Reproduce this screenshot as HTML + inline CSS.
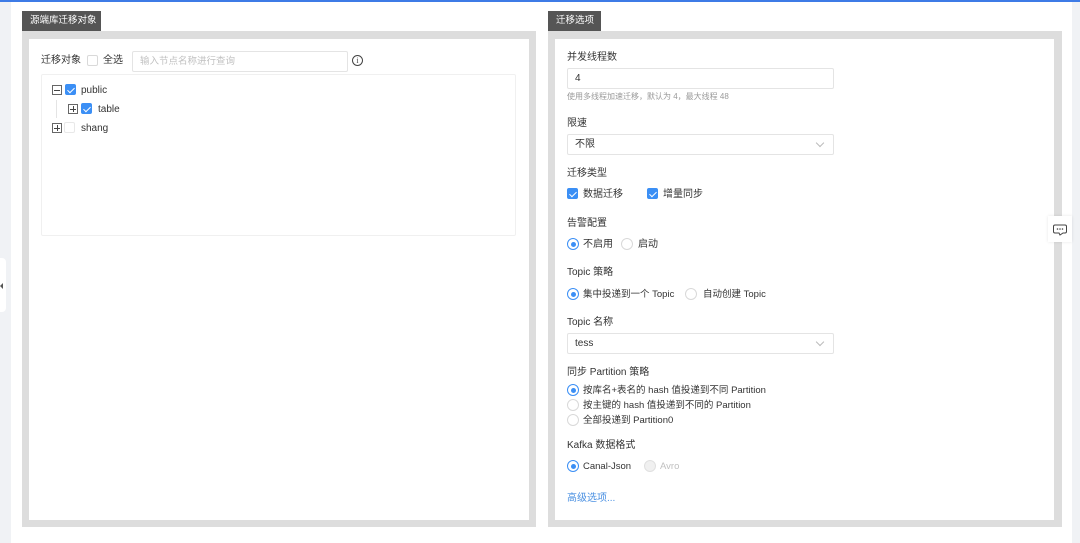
<!DOCTYPE html>
<html><head><meta charset="utf-8"><style>
*{box-sizing:border-box;margin:0;padding:0}
body{width:1080px;height:543px;background:#fff;font-family:"Liberation Sans","Noto Sans CJK SC",sans-serif;font-size:10px;color:#333;position:relative;overflow:hidden}
.a{position:absolute}
.tab{background:#555;color:#fff;font-size:9.5px;line-height:20px;padding-left:8px}
.frame{background:#ddd}
.in{background:#fff}
.lbl{font-size:10px;color:#333;line-height:12px}
.box{border:1px solid #e4e4e4;background:#fff;border-radius:2px;line-height:19px;padding:0 7px}
.cb{width:11px;height:11px;border-radius:2px;border:1px solid #d9d9d9;background:#fff}
.cb.on{background:#3b8ff5;border-color:#3b8ff5}
.cb.on:after{content:"";position:absolute;left:3px;top:1px;width:3px;height:6px;border:solid #fff;border-width:0 1.3px 1.3px 0;transform:rotate(45deg)}
.rd{width:12px;height:12px;border-radius:50%;border:1px solid #d9d9d9;background:#fff}
.rd.on{border-color:#3b8ff5}
.rd.on:after{content:"";position:absolute;left:2.5px;top:2.5px;width:5px;height:5px;border-radius:50%;background:#3b8ff5}
.rd.dis{background:#f0f0f0;border-color:#e0e0e0}
.pm{width:10px;height:10px;border:1px solid #666;background:#fff}
.pm:before{content:"";position:absolute;left:1px;top:3.5px;width:6px;height:1px;background:#444}
.pm.p:after{content:"";position:absolute;left:3.5px;top:1px;width:1px;height:6px;background:#444}
.arr{width:6px;height:6px;border:solid #bbb;border-width:0 1px 1px 0;transform:rotate(45deg)}
</style></head><body>
<div class="a" style="left:0;top:0;width:1080px;height:2px;background:#3d7be6"></div>
<div class="a" style="left:0;top:2px;width:11px;height:541px;background:#f0f2f5"></div>
<div class="a" style="left:1072px;top:2px;width:8px;height:541px;background:#f0f2f5"></div>
<div class="a" style="left:0;top:258px;width:6px;height:54px;background:#fff;border-radius:0 4px 4px 0"></div>
<div class="a" style="left:0;top:283px;width:0;height:0;border:3px solid transparent;border-right:3px solid #555;border-left:0"></div>

<div class="a tab" style="left:22px;top:11px;width:79px;height:20px">源端库迁移对象</div>
<div class="a frame" style="left:22px;top:31px;width:514px;height:496px"></div>
<div class="a in" style="left:29px;top:39px;width:500px;height:481px"></div>
<div class="a lbl" style="left:41px;top:55px">迁移对象</div>
<div class="a cb" style="left:87px;top:55px"></div>
<div class="a lbl" style="left:103px;top:55px">全选</div>
<div class="a box" style="left:132px;top:51px;width:216px;height:21px;color:#c0c0c0;font-size:9.5px">输入节点名称进行查询</div>
<div class="a" style="left:352px;top:55px;width:11px;height:11px;border:1px solid #444;border-radius:50%;font-size:8px;line-height:9px;text-align:center;color:#444;font-family:'Liberation Serif',serif">i</div>
<div class="a box" style="left:41px;top:74px;width:475px;height:162px;border-color:#f0f0f0"></div>
<div class="a pm" style="left:52px;top:85px"></div>
<div class="a cb on" style="left:65px;top:84px"></div>
<div class="a lbl" style="left:81px;top:85px">public</div>
<div class="a" style="left:56px;top:100px;width:1px;height:18px;background:#e4e4e4"></div>
<div class="a pm p" style="left:68px;top:104px"></div>
<div class="a cb on" style="left:81px;top:103px"></div>
<div class="a lbl" style="left:98px;top:104px">table</div>
<div class="a pm p" style="left:52px;top:123px"></div>
<div class="a cb" style="left:64px;top:122px;border-color:#e8e8e8"></div>
<div class="a lbl" style="left:81px;top:123px">shang</div>

<div class="a tab" style="left:548px;top:11px;width:53px;height:20px">迁移选项</div>
<div class="a frame" style="left:548px;top:31px;width:514px;height:496px"></div>
<div class="a in" style="left:555px;top:39px;width:499px;height:481px"></div>

<div class="a lbl" style="left:567px;top:52px">并发线程数</div>
<div class="a box" style="left:567px;top:68px;width:267px;height:21px">4</div>
<div class="a" style="left:567px;top:91px;font-size:8px;color:#999">使用多线程加速迁移，默认为 4，最大线程 48</div>

<div class="a lbl" style="left:567px;top:118px">限速</div>
<div class="a box" style="left:567px;top:134px;width:267px;height:21px">不限</div>
<div class="a arr" style="left:817px;top:140px"></div>

<div class="a lbl" style="left:567px;top:168px">迁移类型</div>
<div class="a cb on" style="left:567px;top:188px"></div>
<div class="a lbl" style="left:583px;top:189px">数据迁移</div>
<div class="a cb on" style="left:647px;top:188px"></div>
<div class="a lbl" style="left:663px;top:189px">增量同步</div>

<div class="a lbl" style="left:567px;top:218px">告警配置</div>
<div class="a rd on" style="left:567px;top:238px"></div>
<div class="a lbl" style="left:583px;top:239px">不启用</div>
<div class="a rd" style="left:621px;top:238px"></div>
<div class="a lbl" style="left:638px;top:239px">启动</div>

<div class="a lbl" style="left:567px;top:267px">Topic 策略</div>
<div class="a rd on" style="left:567px;top:288px"></div>
<div class="a lbl" style="left:583px;top:289px;font-size:9.5px">集中投递到一个 Topic</div>
<div class="a rd" style="left:685px;top:288px"></div>
<div class="a lbl" style="left:703px;top:289px;font-size:9.5px">自动创建 Topic</div>

<div class="a lbl" style="left:567px;top:317px">Topic 名称</div>
<div class="a box" style="left:567px;top:333px;width:267px;height:21px">tess</div>
<div class="a arr" style="left:817px;top:339px"></div>

<div class="a lbl" style="left:567px;top:367px">同步 Partition 策略</div>
<div class="a rd on" style="left:567px;top:384px"></div>
<div class="a lbl" style="left:583px;top:385px;font-size:9.5px">按库名+表名的 hash 值投递到不同 Partition</div>
<div class="a rd" style="left:567px;top:399px"></div>
<div class="a lbl" style="left:583px;top:400px;font-size:9.5px">按主键的 hash 值投递到不同的 Partition</div>
<div class="a rd" style="left:567px;top:414px"></div>
<div class="a lbl" style="left:583px;top:415px;font-size:9.5px">全部投递到 Partition0</div>

<div class="a lbl" style="left:567px;top:440px">Kafka 数据格式</div>
<div class="a rd on" style="left:567px;top:460px"></div>
<div class="a lbl" style="left:583px;top:461px;font-size:9.5px">Canal-Json</div>
<div class="a rd dis" style="left:644px;top:460px"></div>
<div class="a lbl" style="left:660px;top:461px;color:#c0c0c0;font-size:9.5px">Avro</div>

<div class="a lbl" style="left:567px;top:493px;color:#4a90e2">高级选项...</div>

<div class="a" style="left:1048px;top:216px;width:24px;height:26px;background:#fff;box-shadow:0 0 3px rgba(0,0,0,.1)">
<svg width="24" height="26" viewBox="0 0 24 26"><path d="M7 9h10a1.5 1.5 0 0 1 1.5 1.5v5a1.5 1.5 0 0 1-1.5 1.5h-2l-3 2-1-2H7a1.5 1.5 0 0 1-1.5-1.5v-5A1.5 1.5 0 0 1 7 9z" fill="none" stroke="#444" stroke-width="1"/><circle cx="9.5" cy="13" r=".8" fill="#444"/><circle cx="12" cy="13" r=".8" fill="#444"/><circle cx="14.5" cy="13" r=".8" fill="#444"/></svg>
</div>
</body></html>
